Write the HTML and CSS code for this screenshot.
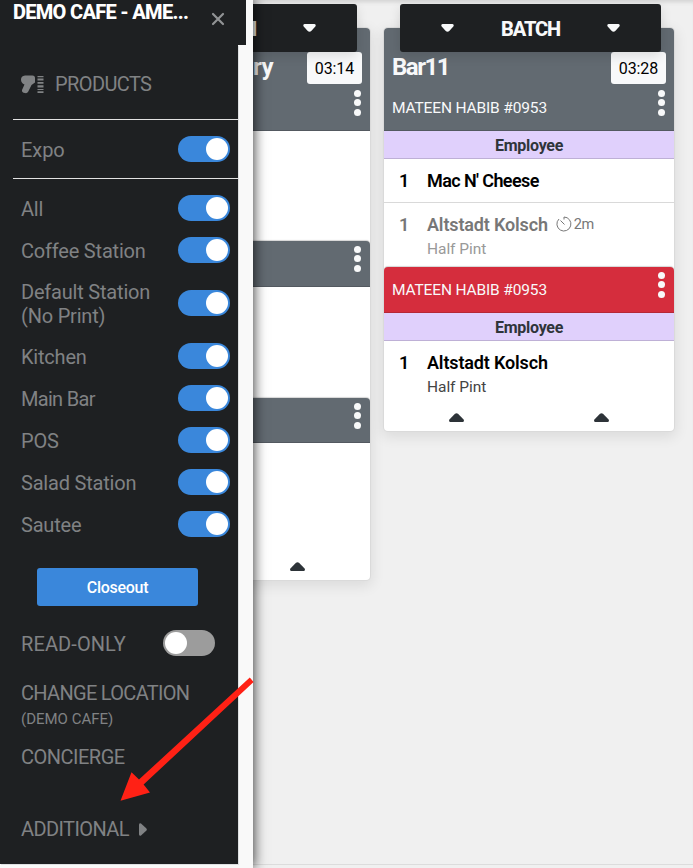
FILE: index.html
```html
<!DOCTYPE html>
<html lang="en">
    <head>
        <meta charset="UTF-8" />
        <meta name="viewport" content="width=device-width, initial-scale=1.0" />
        <title>Kitchen Display</title>
        <link rel="stylesheet" href="styles.css">
    </head>
    <body>
        <main class="board">
            <section class="column column-left">
                <div class="batch">
                    <svg class="caret" viewBox="0 0 13 8"><path d="M1.5 0h10q2 .8.8 2.500L8.500 6.800q-2 2-4 0L.7 2.500Q-.5.8 1.500 0z"/></svg>
                    <span class="batch-label">BATCH</span>
                    <svg class="caret" viewBox="0 0 13 8"><path d="M1.5 0h10q2 .8.8 2.500L8.500 6.800q-2 2-4 0L.7 2.500Q-.5.8 1.500 0z"/></svg>
                </div>
                <div class="card">
                    <header class="card-top">
                        <div class="card-title-row">
                            <h2 class="title-cut">ry</h2>
                            <span class="timer">03:14</span>
                        </div>
                        <div class="card-name-row">
                            <span class="guest"></span>
                            <div class="dots"><i></i><i></i><i></i></div>
                        </div>
                    </header>
                    <div class="space space-1"></div>
                    <header class="ticket">
                        <span class="guest"></span>
                        <div class="dots"><i></i><i></i><i></i></div>
                    </header>
                    <div class="space space-2"></div>
                    <header class="ticket ticket-low">
                        <span class="guest"></span>
                        <div class="dots"><i></i><i></i><i></i></div>
                    </header>
                    <div class="space space-3"></div>
                    <footer class="arrows">
                        <svg class="arrow" viewBox="0 0 15 9"><path d="M6 .8q1.500-1.300 3 0l5.600 5.700q.9 1.700-.6 2.500H1Q-.5 8.200.4 6.500z"/></svg>
                        <svg class="arrow" viewBox="0 0 15 9"><path d="M6 .8q1.500-1.300 3 0l5.600 5.700q.9 1.700-.6 2.500H1Q-.5 8.200.4 6.500z"/></svg>
                    </footer>
                </div>
            </section>

            <section class="column">
                <div class="batch">
                    <svg class="caret" viewBox="0 0 13 8"><path d="M1.5 0h10q2 .8.8 2.500L8.500 6.800q-2 2-4 0L.7 2.500Q-.5.8 1.500 0z"/></svg>
                    <span class="batch-label">BATCH</span>
                    <svg class="caret" viewBox="0 0 13 8"><path d="M1.5 0h10q2 .8.8 2.500L8.500 6.800q-2 2-4 0L.7 2.500Q-.5.8 1.500 0z"/></svg>
                </div>
                <div class="card">
                    <header class="card-top">
                        <div class="card-title-row">
                            <h2>Bar11</h2>
                            <span class="timer">03:28</span>
                        </div>
                        <div class="card-name-row">
                            <span class="guest">MATEEN HABIB #0953</span>
                            <div class="dots"><i></i><i></i><i></i></div>
                        </div>
                    </header>
                    <div class="group">Employee</div>
                    <div class="item item-short">
                        <span class="qty">1</span>
                        <div class="dish"><b class="dish-mac">Mac N' Cheese</b></div>
                    </div>
                    <div class="item item-wait">
                        <span class="qty">1</span>
                        <div class="dish">
                            <div class="dish-line">
                                <b>Altstadt Kolsch</b>
                                <svg class="clock" viewBox="0 0 16 16"><path d="M8 3.500V1a7 7 0 1 1-5 2M4.500 4.500l4 4"/></svg>
                                <span class="wait">2m</span>
                            </div>
                            <small>Half Pint</small>
                        </div>
                    </div>
                    <header class="ticket ticket-late">
                        <span class="guest">MATEEN HABIB #0953</span>
                        <div class="dots"><i></i><i></i><i></i></div>
                    </header>
                    <div class="group">Employee</div>
                    <div class="item item-last">
                        <span class="qty">1</span>
                        <div class="dish">
                            <div class="dish-line"><b>Altstadt Kolsch</b></div>
                            <small>Half Pint</small>
                        </div>
                    </div>
                    <footer class="arrows">
                        <svg class="arrow" viewBox="0 0 15 9"><path d="M6 .8q1.500-1.300 3 0l5.600 5.700q.9 1.700-.6 2.500H1Q-.5 8.200.4 6.500z"/></svg>
                        <svg class="arrow" viewBox="0 0 15 9"><path d="M6 .8q1.500-1.300 3 0l5.600 5.700q.9 1.700-.6 2.500H1Q-.5 8.200.4 6.500z"/></svg>
                    </footer>
                </div>
            </section>
        </main>

        <aside class="drawer">
            <div class="drawer-head">
                <h1>DEMO CAFE - AME...</h1>
                <svg class="close" viewBox="0 0 14 14"><path d="M2 2l10 10M12 2L2 12"/></svg>
            </div>
            <nav class="menu">
                <div class="products">
                    <svg class="products-icon" viewBox="0 0 23 19"><path d="M4 .5h7.500Q14 .5 14 3v4.500L10.500 10 7 17q-1 1.500-3 1Q.5 17.500 1 15l2.500-5.500Q0 8 0 4.500 0 1 4 .5z"/><path d="M16.500 1h6v1.300h-6zM16.500 3.500h6v2h-6zM16.500 7h6v1.800h-6zM16.500 10.200h6v2.200h-6zM16.500 14h6v1h-6zM16.500 16.300h6v1.700h-6z"/></svg>
                    <span>PRODUCTS</span>
                </div>
                <div class="expo"><span>Expo</span><i class="switch"></i></div>
                <div class="stations">
                    <div class="station"><span>All</span><i class="switch"></i></div>
                    <div class="station"><span>Coffee Station</span><i class="switch"></i></div>
                    <div class="station station-tall"><span>Default Station<br>(No Print)</span><i class="switch"></i></div>
                    <div class="station"><span>Kitchen</span><i class="switch"></i></div>
                    <div class="station station-bar"><span>Main Bar</span><i class="switch"></i></div>
                    <div class="station"><span>POS</span><i class="switch"></i></div>
                    <div class="station"><span>Salad Station</span><i class="switch"></i></div>
                    <div class="station"><span>Sautee</span><i class="switch"></i></div>
                </div>
                <button class="closeout">Closeout</button>
                <div class="readonly"><span>READ-ONLY</span><i class="switch switch-off"></i></div>
                <div class="location">CHANGE LOCATION<small>(DEMO CAFE)</small></div>
                <div class="concierge">CONCIERGE</div>
                <div class="additional">
                    <span>ADDITIONAL</span>
                    <svg class="more" viewBox="0 0 8 13"><path d="M0 1.500Q.5-.5 2 .5l5.200 4.700q1.300 1.300 0 2.600L2 12.500Q.5 13.500 0 11.500z"/></svg>
                </div>
            </nav>
        </aside>

        <svg class="pointer" viewBox="0 0 134 126"><path d="M129.800.5l3.800 4.500L23.600 107.500l6.400 8L.5 123.800l11-28.600 7.500 7.300z"/></svg>
    </body>
</html>
```
FILE: styles.css
```css
* {
    margin: 0;
    padding: 0;
    box-sizing: border-box;
}

body {
    position: relative;
    width: 693px;
    height: 868px;
    overflow: hidden;
    background: #f0f0f0;
    font-family: Roboto, "Liberation Sans", sans-serif;
}

svg {
    display: block;
    flex: none;
}

/* ticket board */
.board {
    display: flex;
    align-items: flex-start;
    gap: 14px;
    height: 865px;
    padding: 4px 0 0 80px;
    border-bottom: 1px solid #dcdcdc;
    box-shadow: inset 0 5px 4px -3px #d2d2d2;
}

.column {
    width: 290px;
    flex: none;
}

.batch {
    position: relative;
    z-index: 1;
    display: flex;
    align-items: center;
    justify-content: space-between;
    width: 261px;
    height: 48px;
    margin: 0 0 -24px 16px;
    padding: 0 41px;
    border-radius: 3px;
    background: #1e2022;
    color: #f8f9fa;
    box-shadow: 0 4px 12px rgba(0, 0, 0, 0.12);
}

.batch-label {
    padding-top: 2px;
    font-size: 20px;
    font-weight: 800;
    letter-spacing: -1.1px;
}

.caret {
    width: 13px;
    height: 8px;
    fill: #f8f9fa;
}

.card {
    overflow: hidden;
    border-radius: 4px;
    background: #fff;
    box-shadow: 0 0 0 1px #dadada, 0 4px 14px 2px rgba(0, 0, 0, 0.09);
}

.card-top {
    height: 103px;
    padding: 24px 8px 0;
    border-bottom: 1px solid #535960;
    background: #626a71;
    color: #f8f9fa;
}

.card-title-row {
    display: flex;
    justify-content: space-between;
    height: 32px;
}

.card-title-row h2 {
    font-size: 24px;
    line-height: 31px;
    letter-spacing: -2.2px;
    letter-spacing: -1.5px;
}

.card-title-row .title-cut {
    padding-left: 165px;
    letter-spacing: -0.6px;
}

.timer {
    width: 55px;
    height: 32px;
    border-radius: 3px;
    background: #f8f9fa;
    color: #000;
    font-size: 16px;
    line-height: 34px;
    text-align: center;
    letter-spacing: -0.1px;
}

.card-name-row {
    display: flex;
    justify-content: space-between;
    height: 46px;
    padding-top: 5px;
}

.guest {
    padding-top: 9px;
    font-size: 15.5px;
    line-height: 20px;
    letter-spacing: -0.15px;
}

.dots {
    display: flex;
    flex-direction: column;
    gap: 2.4px;
    padding: 1px 1px 0 0;
}

.dots i {
    width: 7px;
    height: 7px;
    border-radius: 50%;
    background: #f8f9fa;
}

.ticket {
    display: flex;
    justify-content: space-between;
    height: 46px;
    padding: 4px 8px 0;
    border-bottom: 1px solid #535960;
    border-radius: 4px 4px 0 0;
    background: #626a71;
    color: #f8f9fa;
    box-shadow: 0 -1px 1px #d5d5d5;
}

.ticket-low {
    height: 45px;
}

.ticket-late {
    border-bottom-color: #b52837;
    background: #d52d3d;
}

.space-1 {
    height: 110px;
}

.space-2 {
    height: 111px;
}

.space-3 {
    height: 109px;
}

.group {
    height: 28px;
    border-bottom: 1px solid #beb0d6;
    background: #e0d0fc;
    color: #2f353a;
    font-size: 16px;
    font-weight: 700;
    line-height: 29px;
    text-align: center;
    letter-spacing: -0.25px;
}

.item {
    display: flex;
    padding-left: 15px;
    color: #000;
    font-size: 18px;
    line-height: 24px;
}

.item-short {
    height: 44px;
    padding-top: 10px;
    border-bottom: 1px solid #d9d9d9;
}

.item-wait {
    height: 64px;
    padding-top: 10px;
    color: #777;
}

.item-last {
    height: 72px;
    padding-top: 10px;
}

.qty {
    width: 28px;
    flex: none;
    font-weight: 600;
}

.dish b {
    font-weight: 600;
    letter-spacing: -0.15px;
}

.dish .dish-mac {
    letter-spacing: -0.6px;
}

.dish-line {
    display: flex;
    align-items: center;
}

.dish small {
    display: block;
    color: #444;
    font-size: 15.500px;
    line-height: 24px;
    letter-spacing: -0.05px;
}

.item-wait small {
    color: #999;
}

.clock {
    width: 16px;
    height: 16px;
    margin: -2px 0 0 8px;
    fill: none;
    stroke: #777;
    stroke-width: 1;
}

.wait {
    margin-left: 2px;
    font-size: 14.500px;
    letter-spacing: -0.4px;
}

.arrows {
    display: flex;
    justify-content: space-around;
    height: 18px;
}

.arrow {
    width: 15px;
    height: 9px;
    fill: #2d3338;
}

.card > .space-3 + .arrows {
    height: 28px;
    padding-top: 10px;
}

/* side drawer */
.drawer {
    position: absolute;
    z-index: 2;
    top: 0;
    left: 0;
    width: 253px;
    height: 868px;
    background: #f9f9f9;
    box-shadow: 1px 0 12px rgba(0, 0, 0, 0.75);
    color: #808284;
    font-size: 20px;
}

.drawer-head {
    display: flex;
    width: 246px;
    height: 45px;
    padding-left: 13px;
    background: #1e2022;
}

.drawer-head h1 {
    width: 198px;
    color: #fff;
    font-size: 20px;
    font-weight: 800;
    line-height: 24px;
    white-space: nowrap;
    letter-spacing: -0.7px;
}

.close {
    width: 14px;
    height: 14px;
    margin-top: 12px;
    fill: none;
    stroke: #919395;
    stroke-width: 2.2;
    stroke-linecap: round;
}

.menu {
    width: 238px;
    height: 819px;
    padding-left: 13px;
    background: #1e2022;
    box-shadow: 1px 1px 0 #dee0e2;
}

.products {
    display: flex;
    align-items: center;
    gap: 11px;
    height: 75px;
    padding: 4px 0 0 8px;
    border-bottom: 1px solid #e2e2e2;
    letter-spacing: -0.6px;
}

.products-icon {
    width: 23px;
    height: 19px;
    fill: #808284;
}

.expo {
    display: flex;
    align-items: center;
    justify-content: space-between;
    height: 59px;
    padding: 0 8px;
    border-bottom: 1px solid #e2e2e2;
}

.stations {
    padding: 8px 8px 0;
}

.station {
    display: flex;
    align-items: center;
    justify-content: space-between;
    height: 42px;
    line-height: 24px;
    white-space: nowrap;
}

.station span,
.expo span {
    padding-top: 2px;
    letter-spacing: -0.2px;
}

.expo span {
    letter-spacing: -0.05px;
}

.station-bar span {
    letter-spacing: -0.7px;
}

.station-tall {
    height: 64px;
}

.switch {
    width: 52px;
    height: 26px;
    flex: none;
    padding: 2px;
    border-radius: 13px;
    background: #3a87db;
}

.switch::before {
    content: "";
    display: block;
    width: 22px;
    height: 22px;
    margin-left: 26px;
    border-radius: 50%;
    background: #fff;
}

.switch-off {
    background: #9c9c9c;
}

.switch-off::before {
    margin-left: 0;
}

.closeout {
    display: block;
    width: 161px;
    height: 38px;
    margin: 23px 0 0 24px;
    border: none;
    border-radius: 3px;
    background: #3a87db;
    color: #fff;
    font-family: inherit;
    font-size: 16px;
    font-weight: 500;
    letter-spacing: -0.3px;
}

.readonly {
    display: flex;
    align-items: center;
    justify-content: space-between;
    width: 202px;
    height: 26px;
    margin: 24px 0 0;
    padding-left: 8px;
    letter-spacing: 0.1px;
}

.readonly span {
    padding-top: 2px;
}

.location {
    margin-top: 25px;
    padding-left: 8px;
    line-height: 24px;
    letter-spacing: -0.7px;
}

.location small {
    display: block;
    font-size: 15px;
    line-height: 28px;
    letter-spacing: 0;
}

.concierge {
    margin-top: 12px;
    padding-left: 8px;
    line-height: 24px;
    letter-spacing: -0.5px;
}

.additional {
    display: flex;
    align-items: center;
    gap: 10px;
    margin-top: 48px;
    padding-left: 8px;
    line-height: 24px;
    letter-spacing: -0.6px;
}

.more {
    width: 8px;
    height: 13px;
    fill: #808284;
}

/* red annotation arrow */
.pointer {
    position: absolute;
    z-index: 3;
    top: 677px;
    left: 120px;
    width: 134px;
    height: 126px;
    fill: #ff2115;
}
```
